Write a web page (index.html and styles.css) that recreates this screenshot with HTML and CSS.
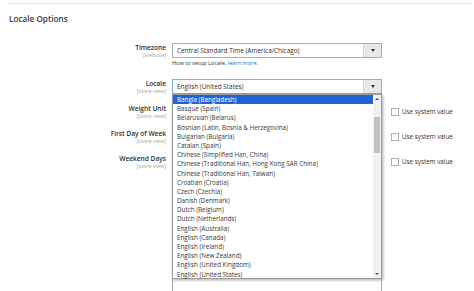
FILE: index.html
```html
<!DOCTYPE html>
<html lang="en">

<head>
    <title>Locale Options</title>
    <meta charset="utf-8">
    <link rel="stylesheet" href="styles.css">
</head>

<body>
    <div class="page">
        <div class="rule"></div>
        <h2 class="section-title">Locale Options</h2>

        <div class="fields">
            <div class="row row-timezone">
                <div class="label">
                    <span class="name">Timezone</span>
                    <span class="scope">[website]</span>
                </div>
                <div class="control">
                    <div class="select">
                        <span class="value">Central Standard Time (America/Chicago)</span>
                        <span class="arrow"></span>
                    </div>
                    <p class="note">How to setup Locale, <a href="#">learn more</a>.</p>
                </div>
                <div class="extra"></div>
            </div>

            <div class="row">
                <div class="label">
                    <span class="name">Locale</span>
                    <span class="scope">[store view]</span>
                </div>
                <div class="control">
                    <div class="select select-open">
                        <span class="value">English (United States)</span>
                        <span class="arrow"></span>
                    </div>
                    <div class="dropdown">
                        <ul class="options">
                            <li class="selected">Bangla (Bangladesh)</li>
                            <li>Basque (Spain)</li>
                            <li>Belarusian (Belarus)</li>
                            <li>Bosnian (Latin, Bosnia &amp; Herzegovina)</li>
                            <li>Bulgarian (Bulgaria)</li>
                            <li>Catalan (Spain)</li>
                            <li>Chinese (Simplified Han, China)</li>
                            <li>Chinese (Traditional Han, Hong Kong SAR China)</li>
                            <li>Chinese (Traditional Han, Taiwan)</li>
                            <li>Croatian (Croatia)</li>
                            <li>Czech (Czechia)</li>
                            <li>Danish (Denmark)</li>
                            <li>Dutch (Belgium)</li>
                            <li>Dutch (Netherlands)</li>
                            <li>English (Australia)</li>
                            <li>English (Canada)</li>
                            <li>English (Ireland)</li>
                            <li>English (New Zealand)</li>
                            <li>English (United Kingdom)</li>
                            <li>English (United States)</li>
                        </ul>
                        <div class="scrollbar">
                            <span class="scroll-up"></span>
                            <span class="scroll-thumb"></span>
                            <span class="scroll-down"></span>
                        </div>
                    </div>
                </div>
                <div class="extra"></div>
            </div>

            <div class="row">
                <div class="label">
                    <span class="name">Weight Unit</span>
                    <span class="scope">[store view]</span>
                </div>
                <div class="control">
                    <div class="select">
                        <span class="value"></span>
                        <span class="arrow"></span>
                    </div>
                </div>
                <label class="extra"><span class="checkbox"></span>Use system value</label>
            </div>

            <div class="row">
                <div class="label">
                    <span class="name">First Day of Week</span>
                    <span class="scope">[store view]</span>
                </div>
                <div class="control">
                    <div class="select">
                        <span class="value"></span>
                        <span class="arrow"></span>
                    </div>
                </div>
                <label class="extra"><span class="checkbox"></span>Use system value</label>
            </div>

            <div class="row">
                <div class="label">
                    <span class="name">Weekend Days</span>
                    <span class="scope">[store view]</span>
                </div>
                <div class="control">
                    <div class="multiselect"></div>
                </div>
                <label class="extra"><span class="checkbox"></span>Use system value</label>
            </div>
        </div>
    </div>
</body>

</html>
```

FILE: styles.css
```css
body {
    margin: 0;
    padding: 0;
    overflow: hidden;
    background: #FFFFFF;
    font-family: 'Open Sans', sans-serif;
    color: #303030;
}

.page {
    height: 291px;
    padding: 3px 2px 0 8px;
    box-sizing: border-box;
    overflow: hidden;
}

.rule {
    border-top: 1px solid #E3E3E3;
}

.section-title {
    margin: 9px 0 0 1px;
    font-size: 8.2px;
    line-height: 12px;
    font-weight: 600;
    color: #41362F;
}

.fields {
    margin-top: 18px;
}

.row {
    display: grid;
    grid-template-columns: 158px 210px auto;
    column-gap: 6px;
    margin-bottom: 10px;
}

.row-timezone {
    margin-bottom: 12px;
}

.label {
    display: flex;
    flex-direction: column;
    align-items: flex-end;
    padding-top: 1px;
}

.name {
    font-size: 6.6px;
    line-height: 8px;
    font-weight: 600;
    color: #303030;
}

.scope {
    font-size: 5.4px;
    line-height: 6px;
    color: #A3A3A3;
}

.control {
    position: relative;
}

.select {
    display: flex;
    height: 15px;
    box-sizing: border-box;
    border: 1px solid #ADADAD;
    background: #FFFFFF;
}

.select-open {
    border-color: #7DB1E6;
}

.value {
    flex: 1;
    padding-left: 4px;
    font-size: 6.4px;
    line-height: 13px;
    white-space: nowrap;
    overflow: hidden;
}

.arrow {
    width: 17px;
    background: #E8E8E8;
    border-left: 1px solid #D6D6D6;
    position: relative;
}

.arrow::after {
    content: "";
    position: absolute;
    left: 7px;
    top: 5px;
    border-left: 2px solid transparent;
    border-right: 2px solid transparent;
    border-top: 3px solid #303030;
}

.note {
    margin: 2px 0 0;
    font-size: 5.6px;
    line-height: 7px;
    color: #303030;
}

.note a {
    color: #007BDB;
    text-decoration: none;
}

.dropdown {
    position: absolute;
    top: 15px;
    left: 0;
    z-index: 2;
    display: flex;
    width: 210px;
    height: 185px;
    box-sizing: border-box;
    border: 1px solid #9C9C9C;
    background: #FFFFFF;
    box-shadow: 1px 1px 3px rgba(0, 0, 0, 0.35);
}

.options {
    flex: 1;
    margin: 0;
    padding: 0;
    list-style: none;
}

.options li {
    height: 9.2px;
    padding-left: 4px;
    font-size: 6.3px;
    line-height: 9.2px;
    white-space: nowrap;
    color: #41362F;
}

.options .selected {
    background: #1F63D4;
    color: #FFFFFF;
}

.scrollbar {
    display: flex;
    flex-direction: column;
    width: 8px;
    background: #F1F1F1;
}

.scroll-up,
.scroll-down {
    height: 8px;
    position: relative;
}

.scroll-up::after,
.scroll-down::after {
    content: "";
    position: absolute;
    left: 2px;
    top: 3px;
    border-left: 2px solid transparent;
    border-right: 2px solid transparent;
}

.scroll-up::after {
    border-bottom: 2px solid #505050;
}

.scroll-down {
    margin-top: auto;
}

.scroll-down::after {
    border-top: 2px solid #505050;
}

.scroll-thumb {
    height: 36px;
    margin: 14px 1px 0;
    background: #C1C1C1;
}

.multiselect {
    height: 150px;
    border: 1px solid #ADADAD;
}

.extra {
    display: flex;
    align-items: center;
    gap: 3px;
    height: 15px;
    padding-left: 3px;
    font-size: 6.3px;
    color: #303030;
}

.checkbox {
    width: 6px;
    height: 6px;
    border: 1px solid #ADADAD;
    background: #FFFFFF;
}
```
